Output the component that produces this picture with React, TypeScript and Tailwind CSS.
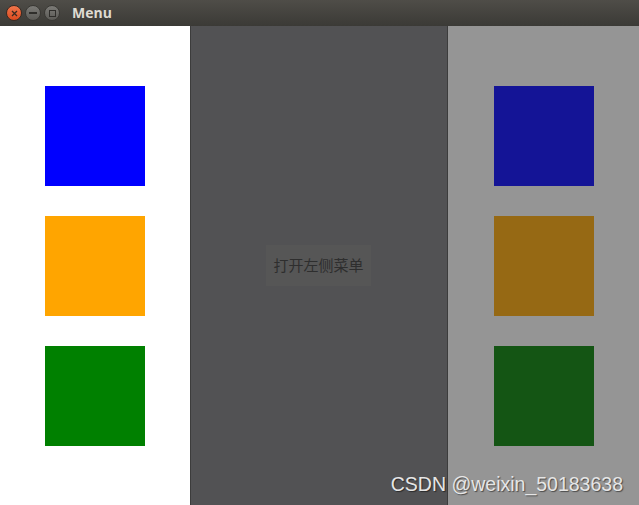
import React from 'react';

const Square: React.FC<{ color: string }> = ({ color }) => (
  <div className={`w-[100px] h-[100px] ${color}`} />
);

const App: React.FC = () => {
  return (
    <div className="w-[639px] h-[505px] flex flex-col overflow-hidden relative font-['Noto_Sans','Noto_Sans_CJK_SC',sans-serif]">
      {/* Title bar */}
      <div className="h-[26px] shrink-0 flex items-center bg-gradient-to-b from-[#4f4d48] to-[#3b3a36] pl-[6px]">
        <div className="w-[16px] h-[16px] rounded-full bg-gradient-to-b from-[#f0754a] to-[#db4a1e] border border-[#3a2a22] flex items-center justify-center">
          <svg width="7" height="7" viewBox="0 0 7 7">
            <path d="M1 1L6 6M6 1L1 6" stroke="#3b2a20" strokeWidth="1.3" />
          </svg>
        </div>
        <div className="ml-[3px] w-[16px] h-[16px] rounded-full bg-gradient-to-b from-[#7c7b77] to-[#5b5a56] border border-[#3a3935] flex items-center justify-center">
          <div className="w-[8px] h-[1.5px] bg-[#2f2e2b]" />
        </div>
        <div className="ml-[3px] w-[16px] h-[16px] rounded-full bg-gradient-to-b from-[#7c7b77] to-[#5b5a56] border border-[#3a3935] flex items-center justify-center">
          <div className="w-[7px] h-[7px] border border-[#2f2e2b]" />
        </div>
        <span className="ml-[12px] text-[14px] font-bold text-[#dfdbd2] leading-none font-['Open_Sans',sans-serif]">Menu</span>
      </div>

      {/* Content */}
      <div className="flex flex-1">
        <div className="w-[190px] bg-white flex flex-col gap-[30px] pt-[60px] pl-[45px]">
          <Square color="bg-[#0000ff]" />
          <Square color="bg-[#ffa500]" />
          <Square color="bg-[#008000]" />
        </div>
        <div className="w-[258px] bg-[#525254] border-x border-[#3c3c3c] flex items-center justify-center">
          <div className="w-[105px] h-[41px] bg-[#565656] flex items-center justify-center text-[15px] text-[#2e2e2e] mt-[-1px] mr-[1px]">
            打开左侧菜单
          </div>
        </div>
        <div className="flex-1 bg-[#959595] flex flex-col gap-[30px] pt-[60px] pl-[46px]">
          <Square color="bg-[#141496]" />
          <Square color="bg-[#966914]" />
          <Square color="bg-[#145514]" />
        </div>
      </div>

      {/* Watermark */}
      <div className="absolute right-[16px] bottom-[6px] text-[19.5px] text-[#e6e6e6] font-['Liberation_Sans',sans-serif] [text-shadow:1px_1px_1px_rgba(0,0,0,0.5)]">
        CSDN @weixin_50183638
      </div>
    </div>
  );
};

export default App;
